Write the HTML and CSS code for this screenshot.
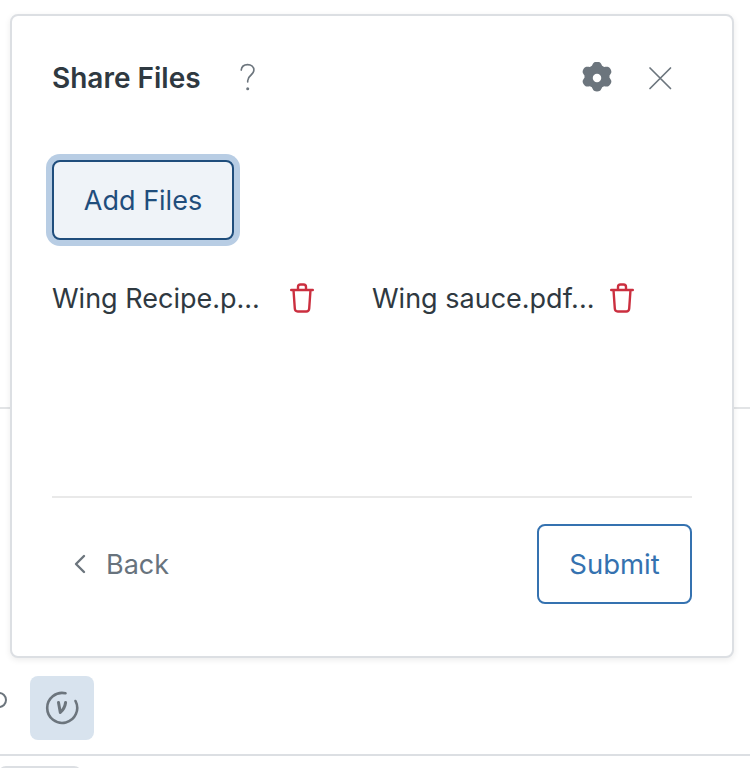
FILE: index.html
```html
<!DOCTYPE html>
<html lang="en">
<head>
    <meta charset="UTF-8">
    <meta name="viewport" content="width=device-width, initial-scale=1.0">
    <title>Share Files</title>
    <link rel="stylesheet" href="styles.css">
</head>
<body>
    <!-- Page behind the popover -->
    <div class="back-line"></div>

    <!-- Popover -->
    <section class="card">
        <header class="card-head">
            <h2 class="card-title">Share Files</h2>
            <svg class="icon-help" width="20" height="32" viewBox="0 0 20 32" fill="none" stroke="#6c757d" stroke-width="1.6" stroke-linecap="round">
                <path d="M3.2 8.2C3.6 4.6 6.2 2.6 9.6 2.6c3.700 0 6.300 2.300 6.300 5.500 0 2.700-1.500 4-3.300 5.400-1.800 1.400-2.900 2.600-2.900 5.200v1.300"/>
                <circle cx="9.700" cy="26.800" r="1.500" fill="#6c757d" stroke="none"/>
            </svg>
            <div class="head-actions">
                <svg class="icon-gear" width="30" height="32" viewBox="4 2 24 26.600" preserveAspectRatio="none">
                    <path fill="#6c757d" d="M13.600 2.600c1.300-.9 3.500-.9 4.800 0 .9.600 1.200 1.800 1.700 2.800l1.600.9c1.100-.1 2.400-.5 3.400 0 1.400.7 2.500 2.600 2.400 4.200-.1 1.100-.9 2-1.500 2.900v1.800c.6.900 1.400 1.800 1.500 2.900.1 1.600-1 3.500-2.400 4.200-1 .5-2.300.1-3.400 0l-1.600.9c-.5 1-.8 2.200-1.700 2.800-1.300.9-3.500.9-4.800 0-.9-.6-1.200-1.800-1.700-2.800l-1.600-.9c-1.100.1-2.400.5-3.400 0-1.400-.7-2.500-2.600-2.400-4.200.1-1.100.9-2 1.500-2.900v-1.800c-.6-.9-1.400-1.800-1.500-2.900-.1-1.600 1-3.500 2.400-4.200 1-.5 2.300-.1 3.400 0l1.600-.9c.5-1 .8-2.200 1.700-2.800z" transform="translate(0 -.2)"/>
                    <ellipse cx="16" cy="15.300" rx="3.400" ry="3.500" fill="#fff"/>
                </svg>
                <svg class="icon-close" width="24" height="24" viewBox="0 0 24 24" fill="none" stroke="#6c757d" stroke-width="1.700" stroke-linecap="round">
                    <path d="M2 2l20.500 20.500M22.500 2L2 22.500"/>
                </svg>
            </div>
        </header>

        <button class="btn-add" type="button">Add Files</button>

        <div class="file-list">
            <div class="file-item">
                <span class="file-name">Wing Recipe.p...</span>
                <svg class="icon-trash" width="24" height="32" viewBox="0 0 24 32" fill="none" stroke="#cb2f3f" stroke-width="2.400" stroke-linecap="round" stroke-linejoin="round">
                    <path d="M1.200 8h21.600M8 8V5c0-1.500 1-2.500 2.500-2.500h3c1.500 0 2.500 1 2.500 2.500v3M3.500 8l1.300 18.500c.1 2 1 3 3 3h8.400c2 0 2.900-1 3-3L20.500 8"/>
                </svg>
            </div>
            <div class="file-item">
                <span class="file-name">Wing sauce.pdf...</span>
                <svg class="icon-trash" width="24" height="32" viewBox="0 0 24 32" fill="none" stroke="#cb2f3f" stroke-width="2.400" stroke-linecap="round" stroke-linejoin="round">
                    <path d="M1.200 8h21.600M8 8V5c0-1.500 1-2.500 2.500-2.500h3c1.500 0 2.500 1 2.500 2.500v3M3.500 8l1.300 18.500c.1 2 1 3 3 3h8.400c2 0 2.900-1 3-3L20.500 8"/>
                </svg>
            </div>
        </div>

        <footer class="card-foot">
            <a class="btn-back" href="#">
                <svg width="12" height="20" viewBox="0 0 12 20" fill="none" stroke="#6c757d" stroke-width="2.400" stroke-linecap="round" stroke-linejoin="round">
                    <path d="M10 2L2 10l8 8"/>
                </svg>
                Back
            </a>
            <button class="btn-submit" type="button">Submit</button>
        </footer>
    </section>

    <!-- Toolbar under the popover -->
    <div class="toolbar">
        <span class="tool-cut"></span>
        <span class="tool-active">
            <svg width="34" height="34" viewBox="0 0 34 34" fill="none" stroke="#6c757d" stroke-width="2.600" stroke-linecap="round">
                <path d="M20.500 2.300A15 15 0 1 0 30.500 10"/>
                <path d="M13.500 11.500l1.800 10c2.800-2.500 4.700-5.500 5.300-10" stroke-width="3" stroke-linejoin="round"/>
            </svg>
        </span>
    </div>
    <div class="tab-peek"></div>
</body>
</html>
```

FILE: styles.css
```css
/* General */
body {
    margin: 0;
    height: 768px;
    overflow: hidden;
    position: relative;
    background-color: #fff;
    font-family: Inter, "Liberation Sans", sans-serif;
    color: #2f3941;
}

/* Line of the page that runs behind the popover */
.back-line {
    position: absolute;
    top: 407px;
    left: 0;
    right: 0;
    height: 2px;
    background-color: #e2e4e6;
}

/* Popover */
.card {
    position: relative;
    box-sizing: border-box;
    width: 724px;
    height: 644px;
    margin: 14px 0 0 10px;
    padding: 0 40px;
    display: flex;
    flex-direction: column;
    background-color: #fff;
    border: 2px solid #dcdfe3;
    border-radius: 8px;
    box-shadow: 0 2px 6px rgba(0, 0, 0, 0.08);
}

.card-head {
    display: flex;
    align-items: center;
    height: 32px;
    margin-top: 46px;
}

.card-title {
    margin: 0;
    font-size: 28px;
    font-weight: 600;
    line-height: 32px;
}

.icon-help {
    margin-left: 37px;
}

.head-actions {
    display: flex;
    align-items: center;
    gap: 36px;
    margin-left: auto;
    margin-right: 20px;
}

/* Buttons */
.btn-add {
    box-sizing: border-box;
    width: 182px;
    height: 80px;
    margin-top: 66px;
    padding: 0;
    font: 400 27px Inter, "Liberation Sans", sans-serif;
    color: #1f4d7c;
    background-color: #eff3f8;
    border: 2px solid #1f4d7c;
    border-radius: 8px;
    box-shadow: 0 0 0 6px #b8cde4;
}

/* Files */
.file-list {
    display: flex;
    margin-top: 42px;
    height: 32px;
}

.file-item {
    display: flex;
    align-items: center;
    gap: 28px;
    width: 320px;
    font-size: 27px;
}

.file-name {
    width: 210px;
    white-space: nowrap;
}

/* Footer */
.card-foot {
    display: flex;
    align-items: center;
    justify-content: space-between;
    margin-top: 182px;
    padding-top: 26px;
    border-top: 2px solid #e9e9e9;
}

.btn-back {
    display: flex;
    align-items: center;
    gap: 20px;
    margin-left: 22px;
    font-size: 27px;
    color: #68737d;
    text-decoration: none;
}

.btn-submit {
    box-sizing: border-box;
    width: 155px;
    height: 80px;
    padding: 0;
    font: 400 27.5px Inter, "Liberation Sans", sans-serif;
    color: #3572b0;
    background-color: #fff;
    border: 2px solid #3572b0;
    border-radius: 8px;
}

/* Toolbar */
.toolbar {
    display: flex;
    align-items: center;
    gap: 23px;
    height: 64px;
    margin-top: 18px;
    padding-bottom: 14px;
    border-bottom: 2px solid #dcdfe3;
}

.tool-cut {
    flex-shrink: 0;
    width: 16px;
    height: 16px;
    margin-left: -9px;
    margin-bottom: 16px;
    box-sizing: border-box;
    border: 2px solid #6c757d;
    border-radius: 50%;
}

.tool-active {
    display: flex;
    align-items: center;
    justify-content: center;
    width: 64px;
    height: 64px;
    background-color: #d8e3ee;
    border-radius: 8px;
}

.tab-peek {
    width: 80px;
    height: 4px;
    margin-top: 10px;
    margin-left: -2px;
    border: 2px solid #dcdfe3;
    border-radius: 8px 8px 0 0;
}
```
